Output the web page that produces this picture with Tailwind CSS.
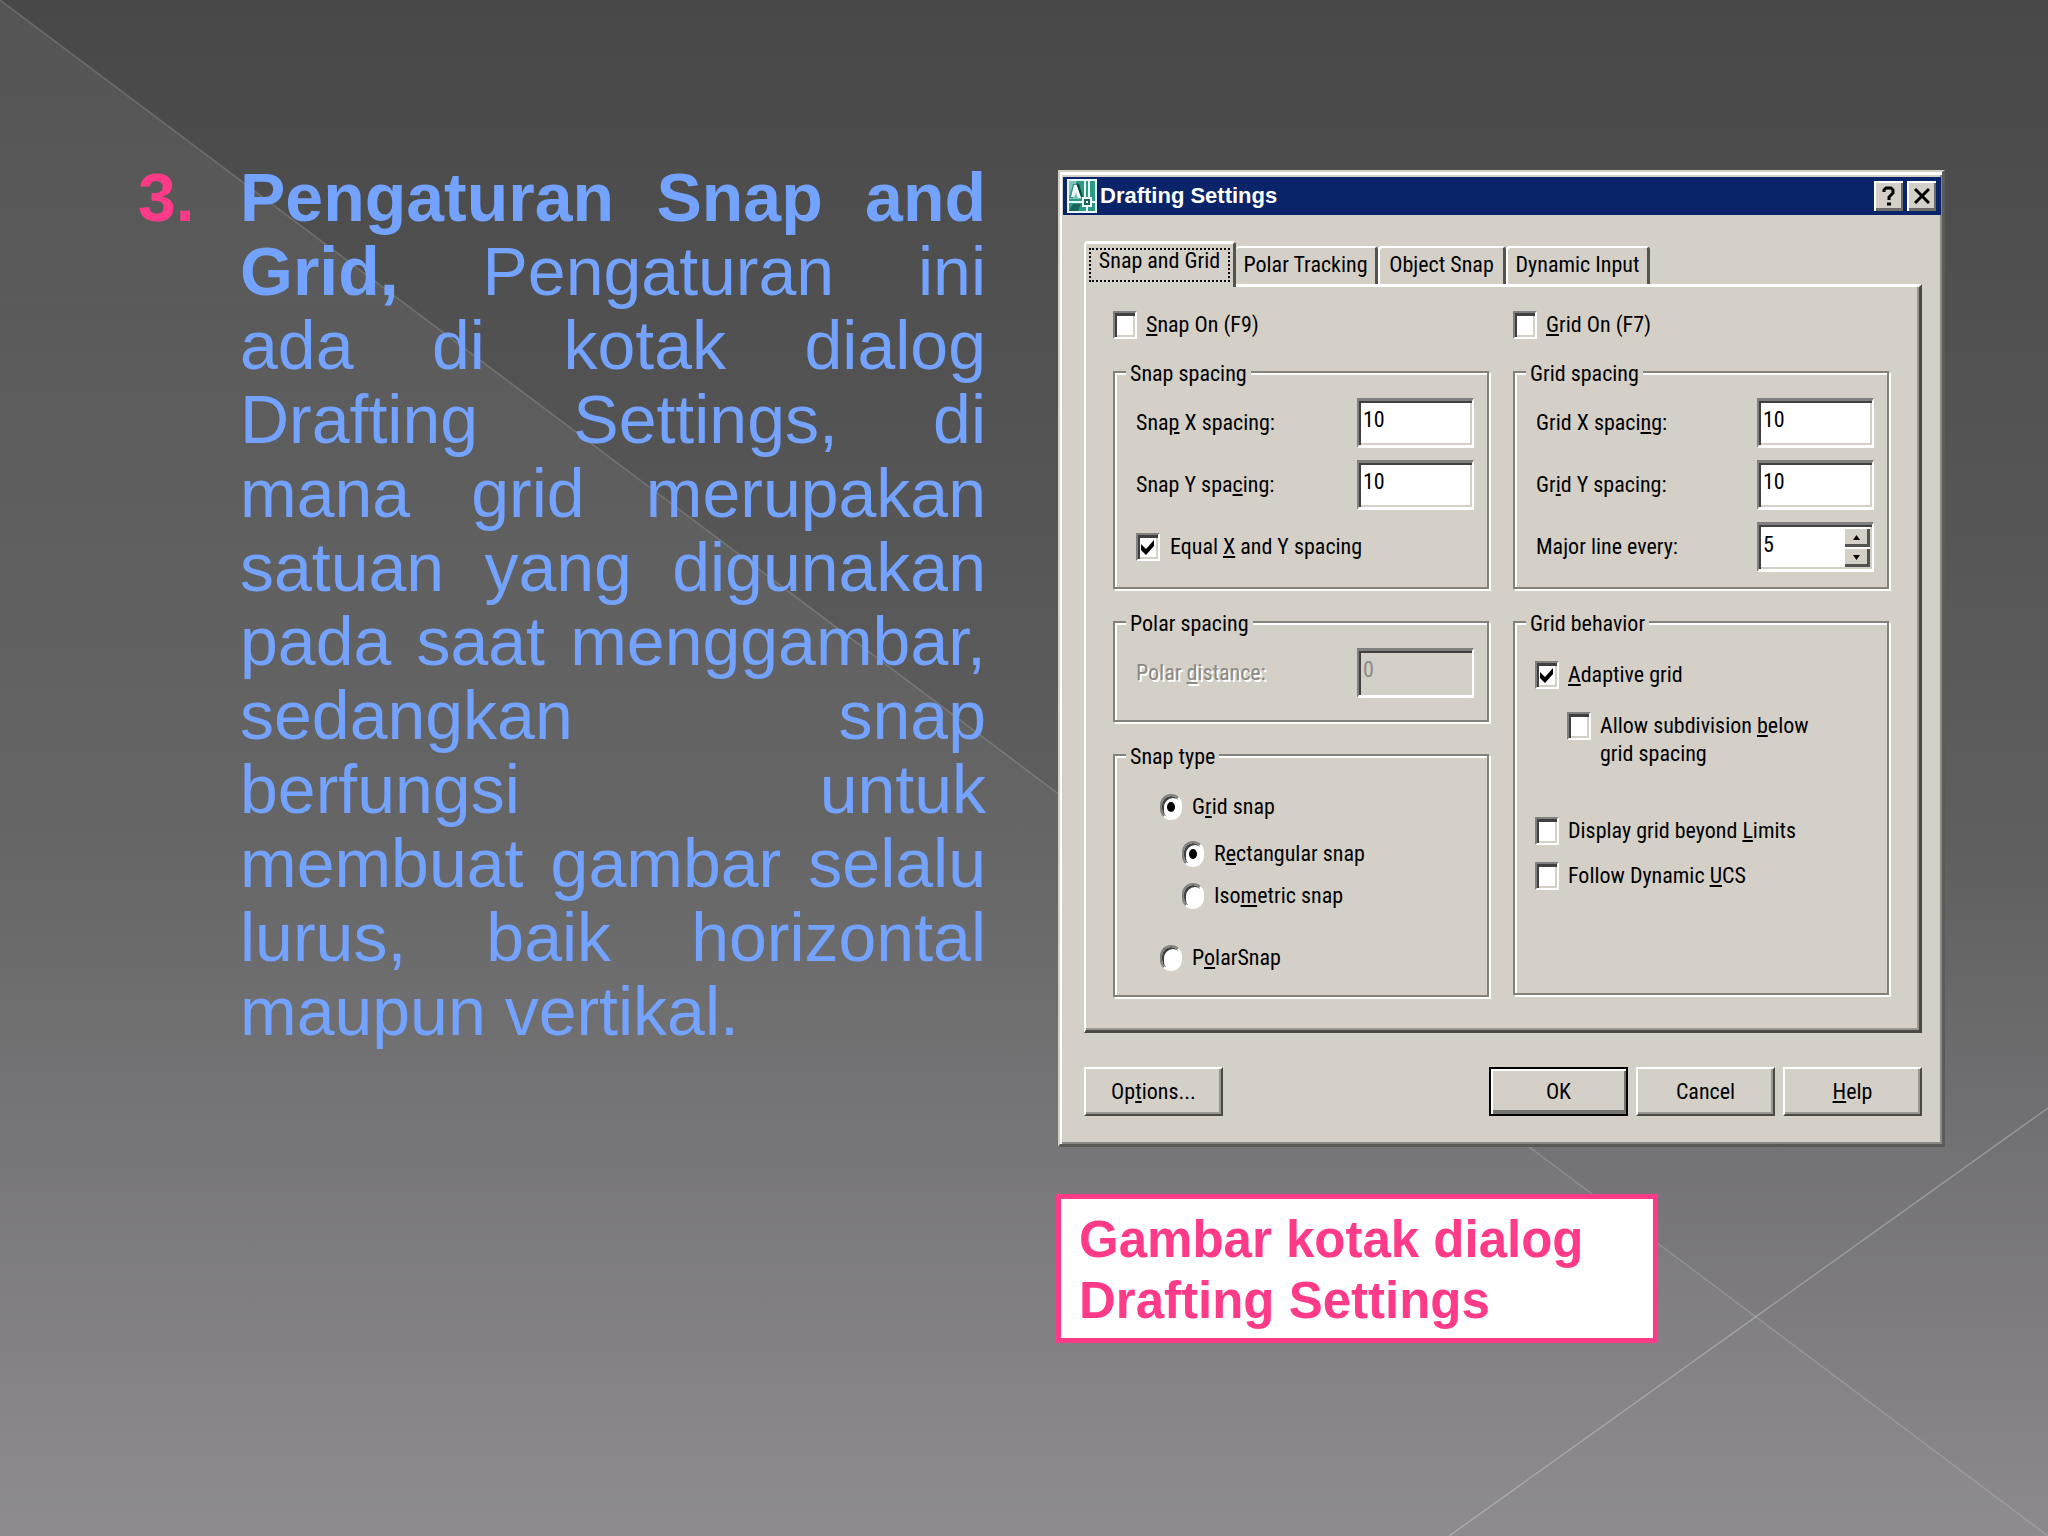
<!DOCTYPE html>
<html lang="id">

<head>
    <meta charset="UTF-8">
    <meta name="viewport" content="width=device-width, initial-scale=1.0">
    <title>Pengaturan Snap and Grid</title>
    <script src="https://cdn.jsdelivr.net/npm/@tailwindcss/browser@4"></script>
</head>

<body class="relative min-h-screen bg-linear-to-b from-[#484848] via-[#605f60] via-55% to-[#8c8a8d] font-['Liberation_Sans',Arial,sans-serif]">
    <!-- Slide background lines -->
    <svg class="absolute inset-0 h-full w-full" viewBox="0 0 2048 1536" preserveAspectRatio="none" aria-hidden="true">
        <defs>
            <linearGradient id="shade" x1="0" y1="0" x2="0" y2="1">
                <stop offset="0" stop-color="#fff" stop-opacity="0.07" />
                <stop offset="1" stop-color="#fff" stop-opacity="0.02" />
            </linearGradient>
        </defs>
        <path d="M0 0 L2048 1536 H0 Z" fill="url(#shade)" />
        <path d="M0 0 L2048 1536" stroke="#fff" stroke-opacity="0.16" stroke-width="1.5" />
        <path d="M1449 1536 L2048 1108" stroke="#fff" stroke-opacity="0.25" stroke-width="1.5" />
    </svg>

    <main class="relative grid grid-cols-[848fr_887fr] items-start gap-[72px] pt-[160px] pr-[103px] pl-[138px]">
        <ol class="text-[68px] leading-[74px] text-[#74a2ff]">
            <li class="flex">
                <span class="w-[102px] shrink-0 font-bold text-[#ff3b89]">3.</span>
                <p class="flex-1 text-justify"><b>Pengaturan Snap and Grid,</b> Pengaturan ini ada di kotak dialog Drafting Settings, di mana grid merupakan satuan yang digunakan pada saat menggambar, sedangkan snap berfungsi untuk membuat gambar selalu lurus, baik horizontal maupun vertikal.</p>
            </li>
        </ol>

        <div class="pt-[10px]">
            <!-- Dialog window -->
            <section class="border-t-2 border-r-3 border-b-3 border-l-2 border-t-[#d4d0c8] border-r-[#5a5a58] border-b-[#5a5a58] border-l-[#d4d0c8] bg-[#d4d0c8] font-['Roboto_Condensed','Liberation_Sans',sans-serif] text-[22px] leading-7 whitespace-nowrap text-black shadow-[inset_2px_3px_#fff,inset_-2px_-2px_#8a8884]">
                <header class="mr-px ml-[3px] flex h-[43px] items-center gap-[3px] border-t-5 border-transparent bg-[#0a246a] bg-clip-padding pr-[5px] pl-1 font-['Liberation_Sans',sans-serif]">
                    <svg class="h-[34px] w-[30px]" viewBox="0 0 30 34" aria-hidden="true">
                        <rect width="30" height="34" fill="#e8f6f4" />
                        <rect x="2" y="2" width="26" height="30" fill="#2a9a86" />
                        <path d="M2 2 H9 L14 16 V20 H2 Z" fill="#7cc4ba" />
                        <path d="M2 19 L6 5 H9 L6 19 Z" fill="#3d8c82" />
                        <path d="M4 18 L7 6 L10 6 L14 19 L11 19 L9 14 L7 18 Z" fill="#f2fbfa" />
                        <path d="M9 4 L12 5 L16 18 L14 18 Z" fill="#0d4a44" />
                        <path d="M2 32 L6 25 H14 L11 32 Z" fill="#17655b" />
                        <path d="M18 2 V19 M22 2 V19 M2 23 H17 M24 23 H28 M20 27 V32" stroke="#e8f6f4" stroke-width="2" />
                        <rect x="16" y="19" width="8" height="8" fill="#17655b" stroke="#f2fbfa" stroke-width="2" />
                        <rect x="19" y="22" width="2" height="2" fill="#f2fbfa" />
                    </svg>
                    <h1 class="flex-1 text-[22px] font-bold text-white">Drafting Settings</h1>
                    <div class="flex gap-1">
                        <button type="button" aria-label="Help" class="grid h-[30px] w-[29px] place-items-center bg-[#d4d0c8] shadow-[inset_2px_2px_#fff,inset_-2px_-3px_#6d6b67]">
                            <svg class="h-5 w-4" viewBox="0 0 16 20" fill="none" stroke="#000" stroke-width="3" aria-hidden="true">
                                <path d="M3 6 V4 L5 2 H10 L12 4 V7 L8 11 V14 M6 18 H10" />
                            </svg>
                        </button>
                        <button type="button" aria-label="Close" class="grid h-[30px] w-[29px] place-items-center bg-[#d4d0c8] shadow-[inset_2px_2px_#fff,inset_-2px_-3px_#6d6b67]">
                            <svg class="h-4 w-4" viewBox="0 0 16 16" stroke="#000" stroke-width="3" aria-hidden="true">
                                <path d="M1 1 L15 15 M15 1 L1 15" />
                            </svg>
                        </button>
                    </div>
                </header>

                <div class="pt-[26px] pr-5 pb-7 pl-6">
                    <div role="tablist" class="flex items-end">
                        <button type="button" role="tab" aria-selected="true" class="relative -mb-[3px] h-[46px] w-[152px] rounded-t border-t-3 border-r-3 border-l-2 border-t-white border-r-[#55534f] border-l-white bg-[#d4d0c8] px-[3px] pt-[3px] pb-[5px]">
                            <span class="flex h-[34px] items-center justify-center border-2 border-dotted border-black pb-2">Snap and Grid</span>
                        </button>
                        <button type="button" role="tab" class="h-[38px] w-[142px] rounded-t border-t-2 border-r-3 border-t-white border-r-[#55534f] pb-[2px]">Polar Tracking</button>
                        <button type="button" role="tab" class="h-[38px] w-[128px] rounded-t border-t-2 border-r-3 border-l-2 border-t-white border-r-[#55534f] border-l-white pb-[2px]">Object Snap</button>
                        <button type="button" role="tab" class="h-[38px] w-[144px] rounded-t border-t-2 border-r-3 border-l-2 border-t-white border-r-[#55534f] border-l-white pb-[2px]">Dynamic Input</button>
                    </div>

                    <div role="tabpanel" class="grid grid-cols-2 gap-x-6 border-t-3 border-r-3 border-b-3 border-l-2 border-t-white border-r-[#4a4946] border-b-[#4a4946] border-l-white pt-6 pr-[30px] pb-[33px] pl-[27px] shadow-[inset_-2px_-2px_#9a9791]">
                        <!-- Snap column -->
                        <div class="flex flex-col">
                            <label class="flex items-center gap-[9px]">
                                <input type="checkbox" class="h-7 w-6 appearance-none border-2 border-t-[#808080] border-r-white border-b-white border-l-[#808080] bg-white shadow-[inset_2px_3px_#404040,inset_-2px_-2px_#d4d0c8]">
                                <span><u>S</u>nap On (F9)</span>
                            </label>

                            <fieldset class="mt-[17px] flex flex-col gap-3 border-2 border-[#84827d] pt-[10px] pr-[13px] pb-[15px] pl-[21px] shadow-[inset_2px_2px_#fff,2px_2px_#fff]">
                                <legend class="-ml-[10px] bg-[#d4d0c8] px-1 pt-1">Snap spacing</legend>
                                <div class="flex h-[50px] items-center justify-between">
                                    <label for="snapX">Sna<u>p</u> X spacing:</label>
                                    <input type="text" id="snapX" value="10" class="h-[50px] w-[117px] border-t-3 border-r-2 border-b-3 border-l-2 border-t-[#808080] border-r-white border-b-white border-l-[#808080] bg-white pb-2 pl-1 shadow-[inset_2px_2px_#404040,inset_-2px_-2px_#d4d0c8]">
                                </div>
                                <div class="flex h-[50px] items-center justify-between">
                                    <label for="snapY">Snap Y spa<u>c</u>ing:</label>
                                    <input type="text" id="snapY" value="10" class="h-[50px] w-[117px] border-t-3 border-r-2 border-b-3 border-l-2 border-t-[#808080] border-r-white border-b-white border-l-[#808080] bg-white pb-2 pl-1 shadow-[inset_2px_2px_#404040,inset_-2px_-2px_#d4d0c8]">
                                </div>
                                <label class="flex h-[50px] items-center gap-[10px]">
                                    <span class="grid">
                                        <input type="checkbox" checked class="col-start-1 row-start-1 h-7 w-6 appearance-none border-2 border-t-[#808080] border-r-white border-b-white border-l-[#808080] bg-white shadow-[inset_2px_3px_#404040,inset_-2px_-2px_#d4d0c8]">
                                        <svg class="pointer-events-none col-start-1 row-start-1 h-7 w-6" viewBox="0 0 24 28" aria-hidden="true">
                                            <path d="M5 11 L10 16 L18 7 V13 L10 22 L5 17 Z" fill="#000" />
                                        </svg>
                                    </span>
                                    <span>Equal <u>X</u> and Y spacing</span>
                                </label>
                            </fieldset>

                            <fieldset class="mt-[17px] border-2 border-[#84827d] pt-[10px] pr-[13px] pb-[22px] pl-[21px] shadow-[inset_2px_2px_#fff,2px_2px_#fff]">
                                <legend class="-ml-[10px] bg-[#d4d0c8] px-1 pt-1">Polar spacing</legend>
                                <div class="flex h-[50px] items-center justify-between">
                                    <label for="polarDistance" class="text-[#8c8a85] text-shadow-[2px_2px_#fff]">Polar <u>d</u>istance:</label>
                                    <input type="text" id="polarDistance" value="0" disabled class="h-[50px] w-[117px] border-t-3 border-r-2 border-b-3 border-l-2 border-t-[#808080] border-r-white border-b-white border-l-[#808080] bg-[#d4d0c8] pb-2 pl-1 text-[#8c8a85] shadow-[inset_2px_2px_#404040]">
                                </div>
                            </fieldset>

                            <fieldset class="mt-[17px] flex flex-col border-2 border-[#84827d] px-[45px] pt-[23px] pb-6 shadow-[inset_2px_2px_#fff,2px_2px_#fff]">
                                <legend class="-ml-[34px] bg-[#d4d0c8] px-1 pt-1">Snap type</legend>
                                <label class="flex h-[26px] items-center gap-[10px]">
                                    <span class="grid">
                                        <input type="radio" name="snapType" checked class="col-start-1 row-start-1 h-[26px] w-[22px] appearance-none rounded-full border-2 border-t-[#808080] border-r-white border-b-white border-l-[#808080] bg-white shadow-[inset_2px_2px_#404040]">
                                        <svg class="pointer-events-none col-start-1 row-start-1 h-[26px] w-[22px]" viewBox="0 0 22 26" aria-hidden="true">
                                            <ellipse cx="11" cy="13" rx="4" ry="5" />
                                        </svg>
                                    </span>
                                    <span>G<u>r</u>id snap</span>
                                </label>
                                <label class="mt-[21px] ml-[22px] flex h-[26px] items-center gap-[10px]">
                                    <span class="grid">
                                        <input type="radio" name="gridSnap" checked class="col-start-1 row-start-1 h-[26px] w-[22px] appearance-none rounded-full border-2 border-t-[#808080] border-r-white border-b-white border-l-[#808080] bg-white shadow-[inset_2px_2px_#404040]">
                                        <svg class="pointer-events-none col-start-1 row-start-1 h-[26px] w-[22px]" viewBox="0 0 22 26" aria-hidden="true">
                                            <ellipse cx="11" cy="13" rx="4" ry="5" />
                                        </svg>
                                    </span>
                                    <span>R<u>e</u>ctangular snap</span>
                                </label>
                                <label class="mt-4 ml-[22px] flex h-[26px] items-center gap-[10px]">
                                    <input type="radio" name="gridSnap" class="h-[26px] w-[22px] appearance-none rounded-full border-2 border-t-[#808080] border-r-white border-b-white border-l-[#808080] bg-white shadow-[inset_2px_2px_#404040]">
                                    <span>Iso<u>m</u>etric snap</span>
                                </label>
                                <label class="mt-9 flex h-[26px] items-center gap-[10px]">
                                    <input type="radio" name="snapType" class="h-[26px] w-[22px] appearance-none rounded-full border-2 border-t-[#808080] border-r-white border-b-white border-l-[#808080] bg-white shadow-[inset_2px_2px_#404040]">
                                    <span>P<u>o</u>larSnap</span>
                                </label>
                            </fieldset>
                        </div>

                        <!-- Grid column -->
                        <div class="flex flex-col">
                            <label class="flex items-center gap-[9px]">
                                <input type="checkbox" class="h-7 w-6 appearance-none border-2 border-t-[#808080] border-r-white border-b-white border-l-[#808080] bg-white shadow-[inset_2px_3px_#404040,inset_-2px_-2px_#d4d0c8]">
                                <span><u>G</u>rid On (F7)</span>
                            </label>

                            <fieldset class="mt-[17px] flex flex-col gap-3 border-2 border-[#84827d] pt-[10px] pr-[13px] pb-[15px] pl-[21px] shadow-[inset_2px_2px_#fff,2px_2px_#fff]">
                                <legend class="-ml-[10px] bg-[#d4d0c8] px-1 pt-1">Grid spacing</legend>
                                <div class="flex h-[50px] items-center justify-between">
                                    <label for="gridX">Grid X spaci<u>n</u>g:</label>
                                    <input type="text" id="gridX" value="10" class="h-[50px] w-[117px] border-t-3 border-r-2 border-b-3 border-l-2 border-t-[#808080] border-r-white border-b-white border-l-[#808080] bg-white pb-2 pl-1 shadow-[inset_2px_2px_#404040,inset_-2px_-2px_#d4d0c8]">
                                </div>
                                <div class="flex h-[50px] items-center justify-between">
                                    <label for="gridY">Gr<u>i</u>d Y spacing:</label>
                                    <input type="text" id="gridY" value="10" class="h-[50px] w-[117px] border-t-3 border-r-2 border-b-3 border-l-2 border-t-[#808080] border-r-white border-b-white border-l-[#808080] bg-white pb-2 pl-1 shadow-[inset_2px_2px_#404040,inset_-2px_-2px_#d4d0c8]">
                                </div>
                                <div class="flex h-[50px] items-center justify-between">
                                    <label for="majorLine">Major line every:</label>
                                    <div class="flex h-[50px] w-[117px] border-t-3 border-r-2 border-b-3 border-l-2 border-t-[#808080] border-r-white border-b-white border-l-[#808080] bg-white pt-[2px] pr-[2px] pb-[2px] shadow-[inset_2px_2px_#404040,inset_-2px_-2px_#d4d0c8]">
                                        <input type="text" id="majorLine" value="5" class="w-0 flex-1 pb-1 pl-1">
                                        <div class="flex w-[27px] flex-col">
                                            <button type="button" aria-label="Increase" class="grid flex-1 place-items-center bg-[#d4d0c8] shadow-[inset_2px_2px_#fff,inset_-3px_-3px_#55534f]">
                                                <svg class="h-[5px] w-[7px]" viewBox="0 0 7 5" aria-hidden="true"><path d="M3.5 0 L7 5 H0 Z" /></svg>
                                            </button>
                                            <button type="button" aria-label="Decrease" class="grid flex-1 place-items-center bg-[#d4d0c8] shadow-[inset_2px_2px_#fff,inset_-3px_-3px_#55534f]">
                                                <svg class="h-[5px] w-[7px]" viewBox="0 0 7 5" aria-hidden="true"><path d="M0 0 H7 L3.5 5 Z" /></svg>
                                            </button>
                                        </div>
                                    </div>
                                </div>
                            </fieldset>

                            <fieldset class="mt-[17px] mb-[2px] flex flex-1 flex-col border-2 border-[#84827d] pt-[23px] pr-[13px] pl-5 shadow-[inset_2px_2px_#fff,2px_2px_#fff]">
                                <legend class="-ml-[9px] bg-[#d4d0c8] px-1 pt-1">Grid behavior</legend>
                                <label class="flex items-center gap-[9px]">
                                    <span class="grid">
                                        <input type="checkbox" checked class="col-start-1 row-start-1 h-7 w-6 appearance-none border-2 border-t-[#808080] border-r-white border-b-white border-l-[#808080] bg-white shadow-[inset_2px_3px_#404040,inset_-2px_-2px_#d4d0c8]">
                                        <svg class="pointer-events-none col-start-1 row-start-1 h-7 w-6" viewBox="0 0 24 28" aria-hidden="true">
                                            <path d="M5 11 L10 16 L18 7 V13 L10 22 L5 17 Z" fill="#000" />
                                        </svg>
                                    </span>
                                    <span><u>A</u>daptive grid</span>
                                </label>
                                <label class="mt-[23px] ml-8 flex items-start gap-[9px]">
                                    <input type="checkbox" class="h-7 w-6 appearance-none border-2 border-t-[#808080] border-r-white border-b-white border-l-[#808080] bg-white shadow-[inset_2px_3px_#404040,inset_-2px_-2px_#d4d0c8]">
                                    <span>Allow subdivision <u>b</u>elow<br>grid spacing</span>
                                </label>
                                <label class="mt-[49px] flex items-center gap-[9px]">
                                    <input type="checkbox" class="h-7 w-6 appearance-none border-2 border-t-[#808080] border-r-white border-b-white border-l-[#808080] bg-white shadow-[inset_2px_3px_#404040,inset_-2px_-2px_#d4d0c8]">
                                    <span>Display grid beyond <u>L</u>imits</span>
                                </label>
                                <label class="mt-[17px] flex items-center gap-[9px]">
                                    <input type="checkbox" class="h-7 w-6 appearance-none border-2 border-t-[#808080] border-r-white border-b-white border-l-[#808080] bg-white shadow-[inset_2px_3px_#404040,inset_-2px_-2px_#d4d0c8]">
                                    <span>Follow Dynamic <u>U</u>CS</span>
                                </label>
                            </fieldset>
                        </div>
                    </div>

                    <div class="mt-[34px] flex gap-2">
                        <button type="button" class="mr-auto h-[49px] w-[139px] border-2 border-t-white border-r-[#4a4946] border-b-[#4a4946] border-l-white shadow-[inset_-2px_-2px_#9a9791]">Op<u>t</u>ions...</button>
                        <button type="button" class="h-[49px] w-[139px] border-2 border-black shadow-[inset_2px_2px_#fff,inset_-2px_-4px_#77756f]">OK</button>
                        <button type="button" class="h-[49px] w-[139px] border-2 border-t-white border-r-[#4a4946] border-b-[#4a4946] border-l-white shadow-[inset_-2px_-2px_#9a9791]">Cancel</button>
                        <button type="button" class="h-[49px] w-[139px] border-2 border-t-white border-r-[#4a4946] border-b-[#4a4946] border-l-white shadow-[inset_-2px_-2px_#9a9791]"><u>H</u>elp</button>
                    </div>
                </div>
            </section>

            <p class="mt-[47px] -ml-[2px] w-[602px] border-5 border-[#ff3b89] bg-white px-[18px] pt-[10px] pb-[7px] text-[51px] leading-[61px] font-bold text-[#ff3b89]">Gambar kotak dialog Drafting Settings</p>
        </div>
    </main>
</body>

</html>
